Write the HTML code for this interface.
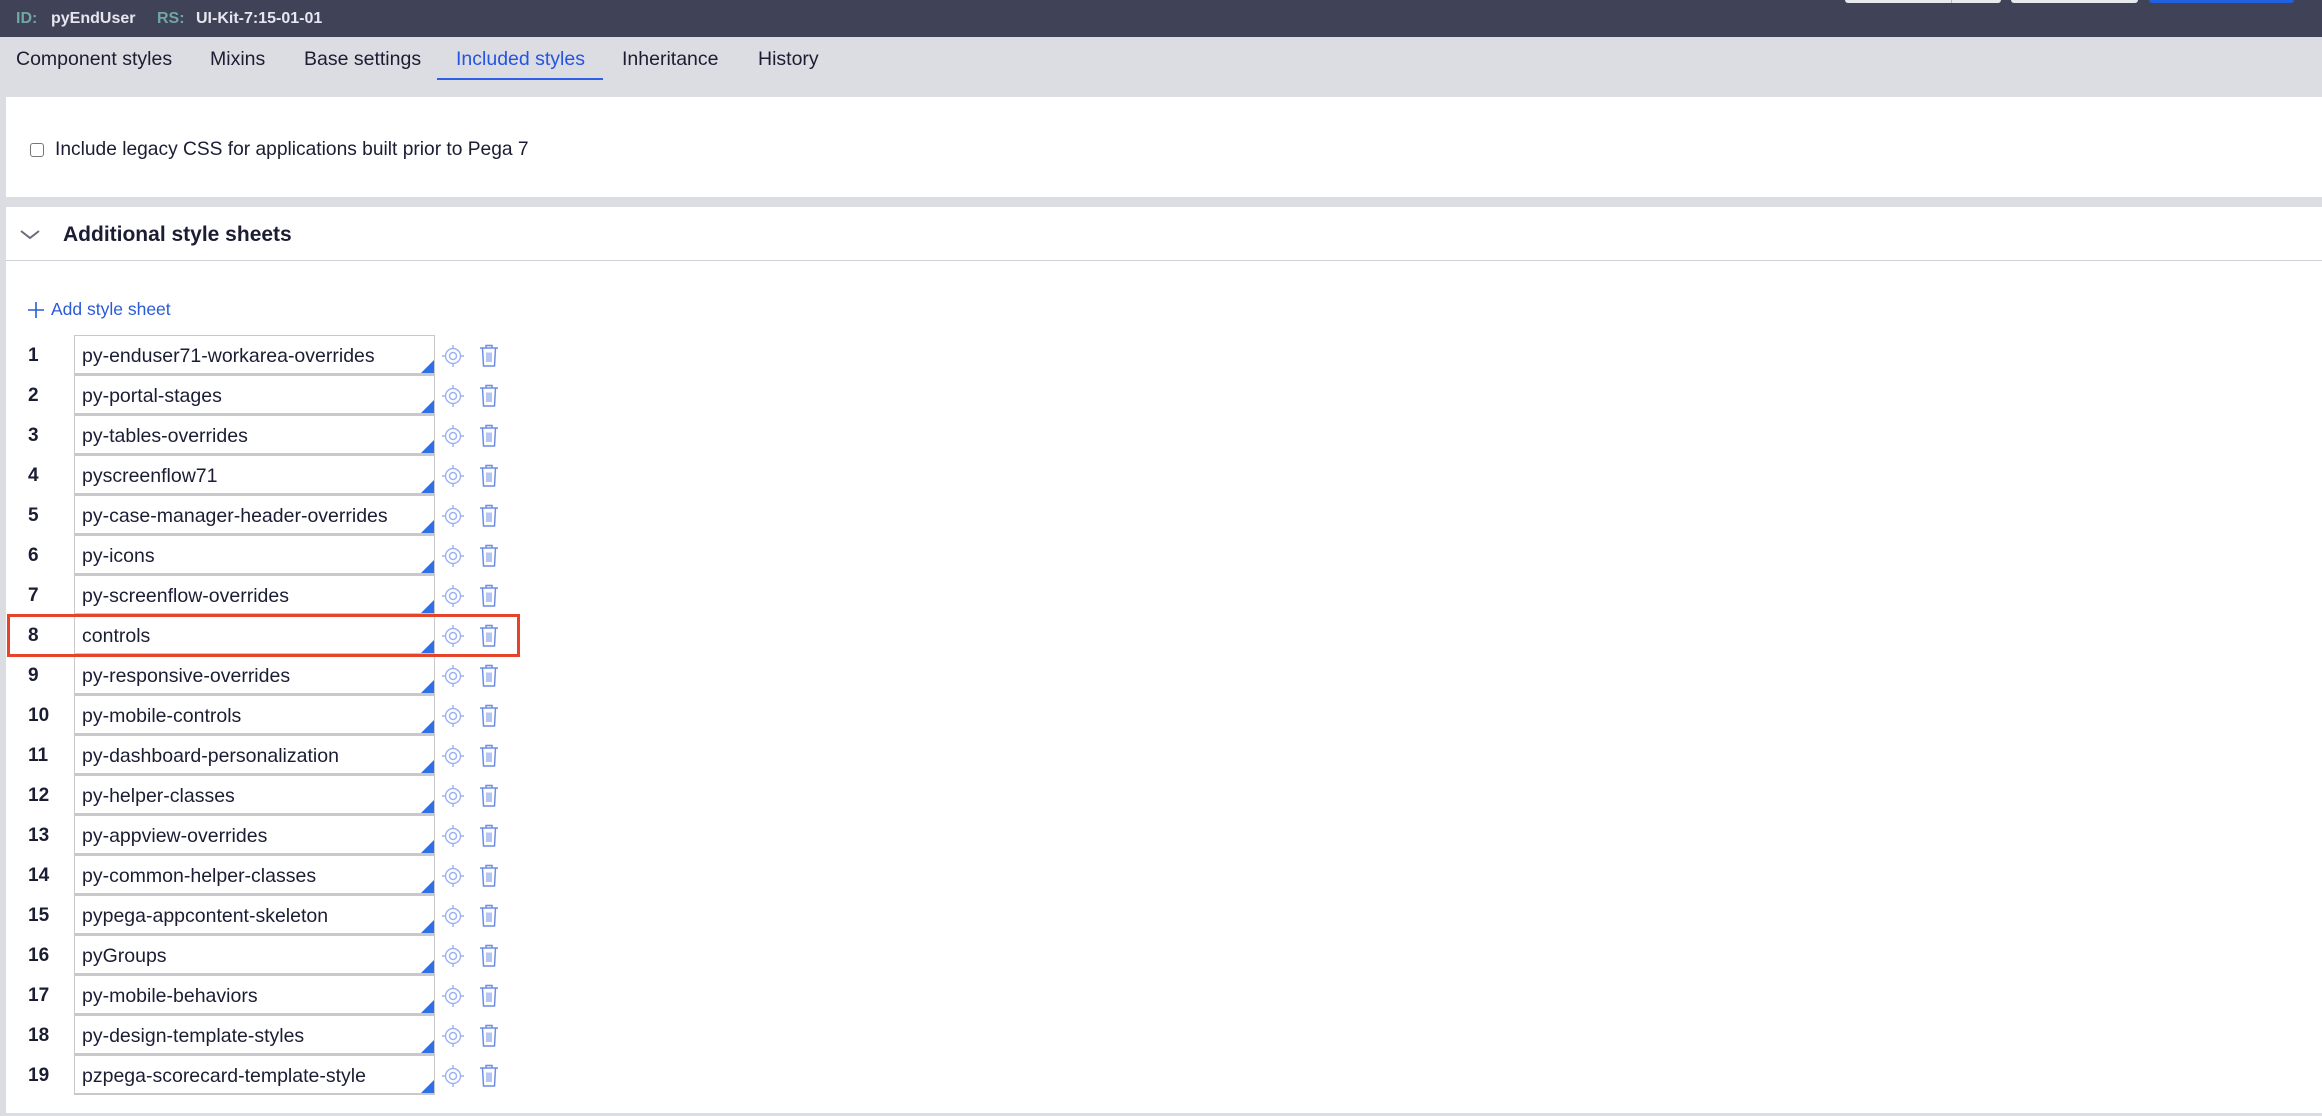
<!DOCTYPE html>
<html><head><meta charset="utf-8"><style>
*{margin:0;padding:0;box-sizing:border-box}
body{width:2322px;height:1116px;background:#dcdde2;font-family:"Liberation Sans",sans-serif;position:relative;overflow:hidden;color:#1b1d33}
.hdr{position:absolute;left:0;top:0;width:2322px;height:37px;background:#404258}
.hdr span{position:absolute;top:10px;font-size:16px;font-weight:bold;color:#e6e7ee}
.hdr .k{color:#6fa8a3}
.btn{position:absolute;top:0;height:3px;background:#e8e9ee;border-radius:0 0 4px 4px}
.tab{position:absolute;top:48px;font-size:19.5px;color:#1b1d33}
.p{position:absolute;background:#fff}
.row{position:absolute;left:0;height:40px;width:540px}
.num{position:absolute;left:28px;top:10px;font-weight:bold;font-size:19px}
.inp{position:absolute;left:74px;top:0;width:361px;height:40px;border:1px solid #c9c9cc;border-bottom:2px solid #c9c9cc;background:#fff;font-size:19.5px;padding:9px 0 0 7px;white-space:nowrap}
.inp:after{content:"";position:absolute;right:0;bottom:0;border-style:solid;border-width:0 0 13px 13px;border-color:transparent transparent #2f6fe8 transparent}
.ic{position:absolute;top:8px}
</style></head><body>
<div class="hdr">
<span class="k" style="left:16px">ID:</span><span style="left:51px">pyEndUser</span>
<span class="k" style="left:157px">RS:</span><span style="left:196px">UI-Kit-7:15-01-01</span>
<div class="btn" style="left:1845px;width:156px"></div>
<div style="position:absolute;left:1951px;top:0;width:1px;height:3px;background:#b8b9c0"></div>
<div class="btn" style="left:2011px;width:127px"></div>
<div class="btn" style="left:2149px;width:145px;background:#2160e0"></div>
</div>
<div class="tab" style="left:16px">Component styles</div>
<div class="tab" style="left:210px">Mixins</div>
<div class="tab" style="left:304px">Base settings</div>
<div class="tab" style="left:456px;color:#2555e0">Included styles</div>
<div style="position:absolute;left:437px;top:78px;width:166px;height:2px;background:#2f5ee8"></div>
<div class="tab" style="left:622px">Inheritance</div>
<div class="tab" style="left:758px">History</div>

<div class="p" style="left:6px;top:97px;width:2316px;height:100px">
<div style="position:absolute;left:24px;top:46px;width:14px;height:14px;border:1.5px solid #777;border-radius:3px"></div>
<div style="position:absolute;left:49px;top:42px;font-size:19.2px">Include legacy CSS for applications built prior to Pega 7</div>
</div>

<div class="p" style="left:6px;top:207px;width:2316px;height:906px">
<svg style="position:absolute;left:13px;top:22px" width="22" height="12"><path d="M2 2 L11 9 L20 2" fill="none" stroke="#6a6c7c" stroke-width="2"/></svg>
<div style="position:absolute;left:57px;top:16px;font-size:21px;font-weight:bold">Additional style sheets</div>
<div style="position:absolute;left:0;top:53px;width:2316px;height:1px;background:#cfd0d6"></div>
<svg style="position:absolute;left:21px;top:94px" width="18" height="18"><path d="M9 1V17M1 9H17" stroke="#2a5bd7" stroke-width="1.6"/></svg>
<div style="position:absolute;left:45px;top:92px;font-size:17.5px;color:#2a5bd7">Add style sheet</div>
</div>

<div id="rows" style="position:absolute;left:0;top:335px"></div>
<div style="position:absolute;left:7px;top:614px;width:513px;height:43px;border:3px solid #e5432a"></div>

<script>
var names=["py-enduser71-workarea-overrides","py-portal-stages","py-tables-overrides","pyscreenflow71","py-case-manager-header-overrides","py-icons","py-screenflow-overrides","controls","py-responsive-overrides","py-mobile-controls","py-dashboard-personalization","py-helper-classes","py-appview-overrides","py-common-helper-classes","pypega-appcontent-skeleton","pyGroups","py-mobile-behaviors","py-design-template-styles","pzpega-scorecard-template-style"];
var tgt='<svg class="ic" style="left:441px;top:9px" width="24" height="24"><g fill="none" stroke="#9bb1f3" stroke-width="1.4"><circle cx="12" cy="12" r="7.5"/><circle cx="12" cy="12" r="3.5"/><path d="M12 1V4.5M12 19.5V23M1 12H4.5M19.5 12H23"/></g></svg>';
var tr='<svg class="ic" style="left:478px" width="22" height="26"><g fill="none" stroke="#6d8ee6" stroke-width="1.5"><path d="M2 5H20M8 5V2.5H14V5"/><path d="M4.5 5L5.5 23H16.5L17.5 5"/><path d="M9 9.5V19M11 9.5V19M13 9.5V19" stroke-width="1"/></g></svg>';
var h="";
names.forEach(function(n,i){
h+='<div class="row" style="top:'+(i*40)+'px"><div class="num">'+(i+1)+'</div><div class="inp">'+n+'</div>'+tgt+tr+'</div>';
});
document.getElementById("rows").innerHTML=h;
</script>
</body></html>
